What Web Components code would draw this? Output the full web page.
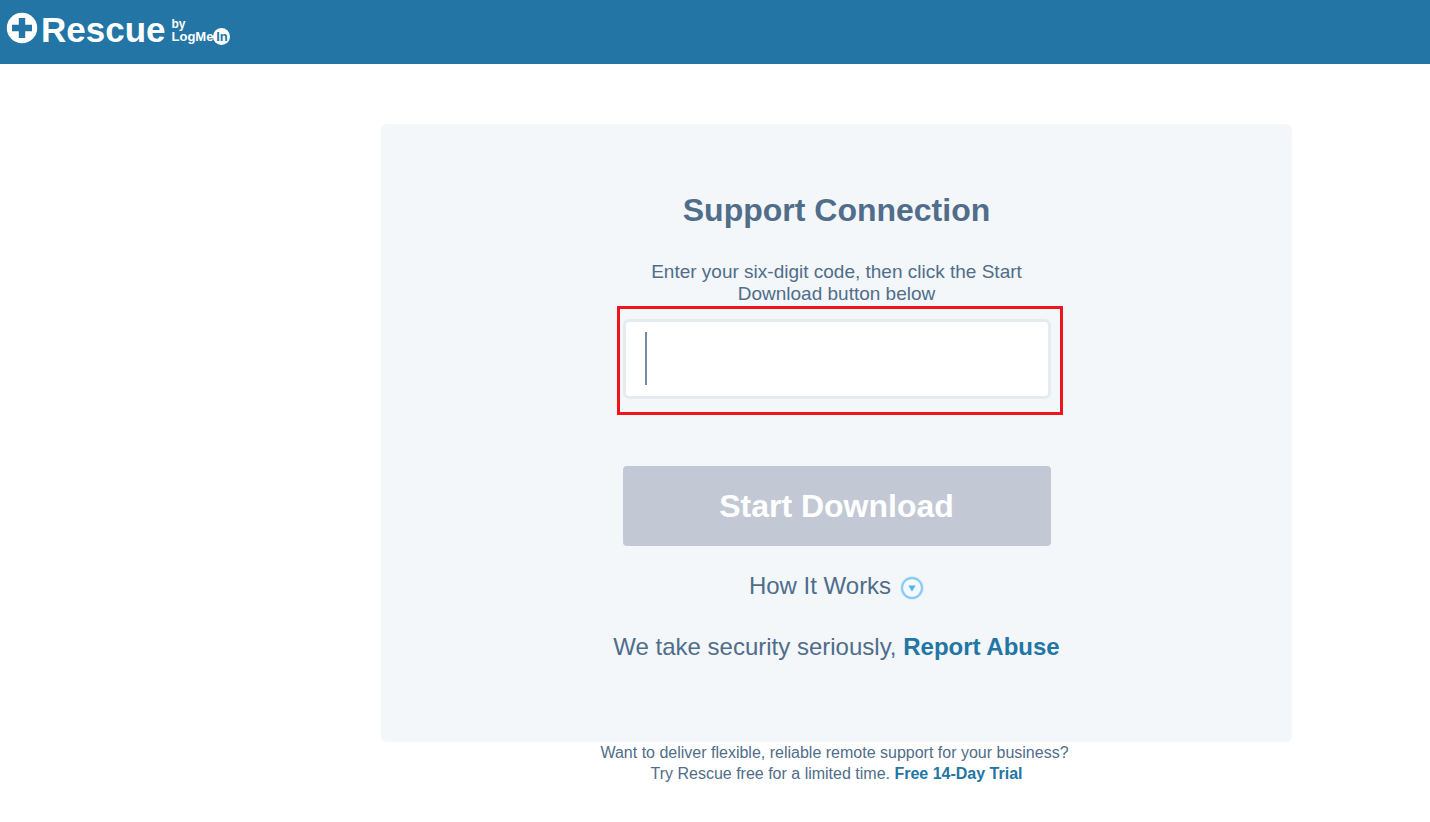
<!DOCTYPE html>
<html lang="en">
<head>
<meta charset="utf-8">
<meta name="viewport" content="width=device-width, initial-scale=1">
<title>Support Connection</title>
<style>
  body {
    margin: 0;
    background: #fff;
    color: #506d8a;
    font-family: "Liberation Sans", Arial, Helvetica, sans-serif;
    --brand: #2275a4;
    --panel: #f3f7fa;
  }
</style>
</head>
<body>
<rescue-page></rescue-page>

<template id="tpl-logo">
  <style>
    :host { display: block; }
    a { display: flex; align-items: flex-start; width: max-content; color: #fff; text-decoration: none; font-weight: bold; }
    .cross { display: block; width: 32px; height: 32px; margin-right: 3px; }
    .name { font-size: 35px; line-height: 36px; margin-right: 6px; }
    .by { display: flex; flex-direction: column; gap: 0; padding-top: 6px; font-size: 13px; line-height: 13px; }
    .by > span:first-child { font-size: 12px; line-height: 12px; }
    .row { display: flex; align-items: center; }
    .in { display: grid; place-items: center; width: 17px; height: 17px; margin: -3px 0; border-radius: 50%; background: #fff; color: var(--brand); }
  </style>
  <a href="#" aria-label="Rescue by LogMeIn">
    <svg class="cross" viewBox="0 0 32 32" aria-hidden="true">
      <circle cx="16" cy="16" r="15.2" fill="#fff"/>
      <path d="M12.8 6h6.4v6.8H26v6.4h-6.8V26h-6.4v-6.8H6v-6.4h6.8z" fill="#2275a4"/>
    </svg>
    <span class="name">Rescue</span>
    <span class="by"><span>by</span><span class="row">LogMe<span class="in">In</span></span></span>
  </a>
</template>

<template id="tpl-header">
  <style>
    :host { display: block; }
    header { display: flex; align-items: flex-start; min-height: 64px; padding: 12px 6px 0; box-sizing: border-box; background: var(--brand); }
  </style>
  <header><slot></slot></header>
</template>

<template id="tpl-code">
  <style>
    :host { display: block; position: relative; }
    label { display: block; margin: 0 auto 14px; padding: 0 24px; font-size: 19px; line-height: 22px; text-align: center; }
    .field { position: relative; }
    input { display: block; width: 100%; height: 80px; box-sizing: border-box; padding: 10px 20px; border: 3px solid #e6ebf0; border-radius: 6px; background: #fff; color: inherit; font: 48px "Liberation Sans", Arial, sans-serif; outline: none; caret-color: transparent; }
    .caret { position: absolute; left: 22px; top: 13px; bottom: 14px; width: 2px; background: #7489a5; pointer-events: none; }
    .highlight { position: absolute; inset: -13px -12px -16px -6px; border: 3px solid #ef151d; pointer-events: none; }
  </style>
  <label for="code"><slot></slot></label>
  <div class="field">
    <input id="code" type="text" inputmode="numeric" maxlength="6" autocomplete="off">
    <span class="caret"></span>
    <span class="highlight"></span>
  </div>
</template>

<template id="tpl-button">
  <style>
    :host { display: block; }
    button { display: block; width: 100%; height: 80px; padding: 0; border: 0; border-radius: 4px; background: #c2c9d5; color: #fff; font: bold 32px "Liberation Sans", Arial, sans-serif; }
  </style>
  <button type="button"><slot></slot></button>
</template>

<template id="tpl-how">
  <style>
    :host { display: block; }
    button { display: flex; align-items: center; gap: 9px; margin: 0 auto; padding: 0; border: 0; background: none; color: inherit; font: 24px/28px "Liberation Sans", Arial, sans-serif; cursor: pointer; }
    svg { display: block; width: 24px; height: 24px; margin-top: 4px; }
  </style>
  <button type="button" aria-expanded="false"><slot></slot>
    <svg viewBox="0 0 24 24" aria-hidden="true">
      <circle cx="12" cy="12" r="10.2" fill="#f3f9fd" stroke="#d9e5ec" stroke-width="3"/>
      <circle cx="12" cy="12" r="10" fill="none" stroke="#82cbf5" stroke-width="1.8"/>
      <path d="M8.4 9.4h7.2L12 15.4z" fill="#4db6ec"/>
    </svg>
  </button>
</template>

<template id="tpl-link">
  <style>
    :host { display: inline; }
    a { color: var(--brand); font-weight: bold; text-decoration: none; }
  </style>
  <a href="#"><slot></slot></a>
</template>

<template id="tpl-card">
  <style>
    :host { display: block; }
    section { display: flex; flex-direction: column; align-items: center; padding: 68px 24px 81px; border-radius: 6px; background: var(--panel); }
    h1 { margin: 0 0 32px; font-size: 32px; line-height: 37px; }
    code-field, start-button { width: 100%; max-width: 428px; }
    start-button { margin: 67px 0 26px; }
    p { margin: 33px 0 0; font-size: 24px; line-height: 28px; text-align: center; }
  </style>
  <section>
    <h1>Support Connection</h1>
    <code-field>Enter your six-digit code, then click the Start Download button below</code-field>
    <start-button>Start Download</start-button>
    <how-it-works>How It Works</how-it-works>
    <p>We take security seriously, <text-link>Report Abuse</text-link></p>
  </section>
</template>

<template id="tpl-promo">
  <style>
    :host { display: block; }
    p { margin: 0; padding-right: 4px; font-size: 16px; line-height: 21px; text-align: center; }
    p + p { padding: 0; }
  </style>
  <p>Want to deliver flexible, reliable remote support for your business?</p>
  <p>Try Rescue free for a limited time. <text-link>Free 14-Day Trial</text-link></p>
</template>

<template id="tpl-page">
  <style>
    :host { display: block; }
    main { display: grid; grid-template-columns: 381fr minmax(0, 911px) 138fr; padding: 60px 0 36px; }
    .content { grid-column: 2; }
  </style>
  <site-header><rescue-logo></rescue-logo></site-header>
  <main>
    <div class="content">
      <support-card></support-card>
      <trial-promo></trial-promo>
    </div>
  </main>
</template>

<script>
  const define = (name, templateId) => customElements.define(name, class extends HTMLElement {
    constructor() {
      super();
      this.attachShadow({ mode: "open" })
        .append(document.getElementById(templateId).content.cloneNode(true));
    }
  });
  define("rescue-logo", "tpl-logo");
  define("site-header", "tpl-header");
  define("code-field", "tpl-code");
  define("start-button", "tpl-button");
  define("how-it-works", "tpl-how");
  define("text-link", "tpl-link");
  define("support-card", "tpl-card");
  define("trial-promo", "tpl-promo");
  define("rescue-page", "tpl-page");
</script>
</body>
</html>
